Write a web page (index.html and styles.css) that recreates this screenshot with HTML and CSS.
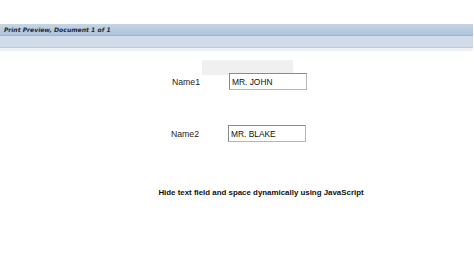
FILE: index.html
```html
<!DOCTYPE html>
<html lang="en">
<head>
    <meta charset="UTF-8">
    <title>Print Preview</title>
    <link rel="stylesheet" href="styles.css">
</head>
<body>
    <div class="toolbar">
        <div class="title-bar">Print Preview, Document 1 of 1</div>
        <div class="tool-row"></div>
        <div class="tool-shadow"></div>
    </div>
    <div class="page">
        <div class="spacer-box"></div>
        <div class="form-row first">
            <label for="name1">Name1</label>
            <input type="text" id="name1" value="MR. JOHN">
        </div>
        <div class="form-row second">
            <label for="name2">Name2</label>
            <input type="text" id="name2" value="MR. BLAKE">
        </div>
        <p class="caption">Hide text field and space dynamically using JavaScript</p>
    </div>
</body>
</html>
```

FILE: styles.css
```css
body {
    margin: 0;
    padding: 0;
    background-color: #fff;
    font-family: Arial, "Liberation Sans", sans-serif;
    width: 474px;
    height: 266px;
    overflow: hidden;
}
.toolbar {
    margin-top: 24px;
    margin-right: 1px;
}
.title-bar {
    height: 11px;
    line-height: 11px;
    padding-left: 4px;
    font-family: Verdana, "DejaVu Sans", sans-serif;
    font-size: 6.1px;
    font-weight: bold;
    font-style: italic;
    color: #1e2a3a;
    background: linear-gradient(#c6d5e4, #aec4da);
    border-bottom: 1px solid #9db5cd;
}
.tool-row {
    height: 11px;
    background-color: #d0dde8;
    border-bottom: 1px solid #b9cbdc;
}
.tool-shadow {
    height: 3px;
    background-color: #eef2f6;
}
.page {
    height: 200px;
}
.spacer-box {
    width: 91px;
    height: 15px;
    margin-left: 202px;
    margin-top: 9px;
    background-color: #f0f0f0;
}
.form-row {
    display: flex;
    align-items: center;
}
.form-row.first {
    margin-top: -2px;
    margin-left: 172px;
}
.form-row.second {
    margin-top: 35px;
    margin-left: 171px;
}
.form-row label {
    width: 57px;
    font-size: 8.7px;
    color: #222;
}
.form-row input {
    box-sizing: border-box;
    width: 78px;
    height: 17px;
    padding: 0 2px;
    font-family: Arial, "Liberation Sans", sans-serif;
    font-size: 8.4px;
    color: #111;
    border: 1px solid #b5b5b5;
    border-top-color: #8a8a8a;
    border-left-color: #8a8a8a;
    outline: none;
}
.caption {
    margin: 46px 0 0 0;
    padding-left: 48px;
    text-align: center;
    font-size: 7.9px;
    font-weight: bold;
    color: #111;
}
```
